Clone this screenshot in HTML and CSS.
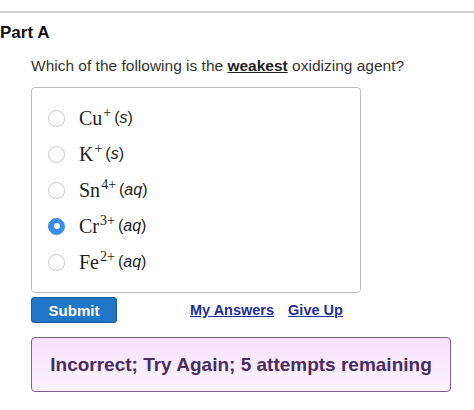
FILE: index.html
```html
<!DOCTYPE html>
<html lang="en">
<head>
    <meta charset="UTF-8">
    <title>Part A</title>
    <link rel="stylesheet" href="styles.css">
</head>
<body>
    <div class="part">
        <h2 class="part-title">Part A</h2>
        <div class="part-body">
            <p class="question">Which of the following is the <strong class="em">weakest</strong> oxidizing agent?</p>

            <div class="choices">
                <label class="choice">
                    <span class="radio"></span>
                    <span class="math">Cu<sup>+</sup></span><span class="state">(<i>s</i>)</span>
                </label>
                <label class="choice">
                    <span class="radio"></span>
                    <span class="math">K<sup>+</sup></span><span class="state">(<i>s</i>)</span>
                </label>
                <label class="choice">
                    <span class="radio"></span>
                    <span class="math">Sn<sup>4+</sup></span><span class="state">(<i>aq</i>)</span>
                </label>
                <label class="choice">
                    <span class="radio checked"></span>
                    <span class="math">Cr<sup>3+</sup></span><span class="state">(<i>aq</i>)</span>
                </label>
                <label class="choice">
                    <span class="radio"></span>
                    <span class="math">Fe<sup>2+</sup></span><span class="state">(<i>aq</i>)</span>
                </label>
            </div>

            <div class="actions">
                <button class="submit">Submit</button>
                <div class="links">
                    <a href="#">My Answers</a>
                    <a href="#">Give Up</a>
                </div>
            </div>

            <div class="feedback">Incorrect; Try Again; 5 attempts remaining</div>
        </div>
    </div>
</body>
</html>
```

FILE: styles.css
```css
* {
    margin: 0;
    padding: 0;
    box-sizing: border-box;
}

body {
    font-family: "Liberation Sans", Arial, sans-serif;
    background: #fff;
    color: #333;
    width: 474px;
    height: 410px;
    overflow: hidden;
}

.part {
    border-top: 2px solid #cfcfcf;
    margin-top: 11px;
}

.part-title {
    font-size: 17px;
    font-weight: bold;
    color: #111;
    line-height: 20px;
    margin-top: 10px;
}

.part-body {
    padding-left: 31px;
}

.question {
    font-size: 15.5px;
    line-height: 18px;
    margin-top: 14px;
    color: #333;
}

.em {
    text-decoration: underline;
    color: #222;
}

.choices {
    margin-top: 12px;
    width: 330px;
    border: 1px solid #bdbdbd;
    border-radius: 4px;
    padding: 16px 0 16px 16px;
    display: flex;
    flex-direction: column;
    gap: 8px;
}

.choice {
    display: flex;
    align-items: center;
    height: 28px;
}

.radio {
    width: 17px;
    height: 17px;
    border: 1px solid #c8c8c8;
    border-radius: 50%;
    margin-right: 14px;
    flex-shrink: 0;
    display: flex;
    align-items: center;
    justify-content: center;
}

.radio.checked {
    background: #3b8ee8;
    border-color: #3b8ee8;
}

.radio.checked::after {
    content: '';
    width: 6px;
    height: 6px;
    border-radius: 50%;
    background: #fff;
}

.math {
    font-family: "Liberation Serif", "Times New Roman", serif;
    font-size: 20px;
    color: #222;
}

.math sup {
    font-size: 14px;
    vertical-align: 8px;
    line-height: 0;
    margin-left: 1px;
}

.state {
    font-size: 16px;
    color: #222;
    margin-left: 3px;
}

.actions {
    display: flex;
    align-items: center;
    margin-top: 4px;
}

.submit {
    width: 86px;
    height: 26px;
    background: #2176c7;
    border: 1px solid #1a5c9c;
    border-radius: 3px;
    color: #fff;
    font-family: "Liberation Sans", Arial, sans-serif;
    font-size: 15px;
    font-weight: bold;
}

.links {
    display: flex;
    gap: 14px;
    margin-left: 73px;
}

.links a {
    color: #1d2f9a;
    font-size: 14.5px;
    font-weight: bold;
}

.feedback {
    margin-top: 14px;
    width: 420px;
    height: 55px;
    border: 1px solid #80608f;
    border-radius: 4px;
    background: linear-gradient(#f6e2fb, #fcf2fe);
    color: #4a2c5e;
    font-size: 19px;
    font-weight: bold;
    display: flex;
    align-items: center;
    justify-content: center;
}
```
